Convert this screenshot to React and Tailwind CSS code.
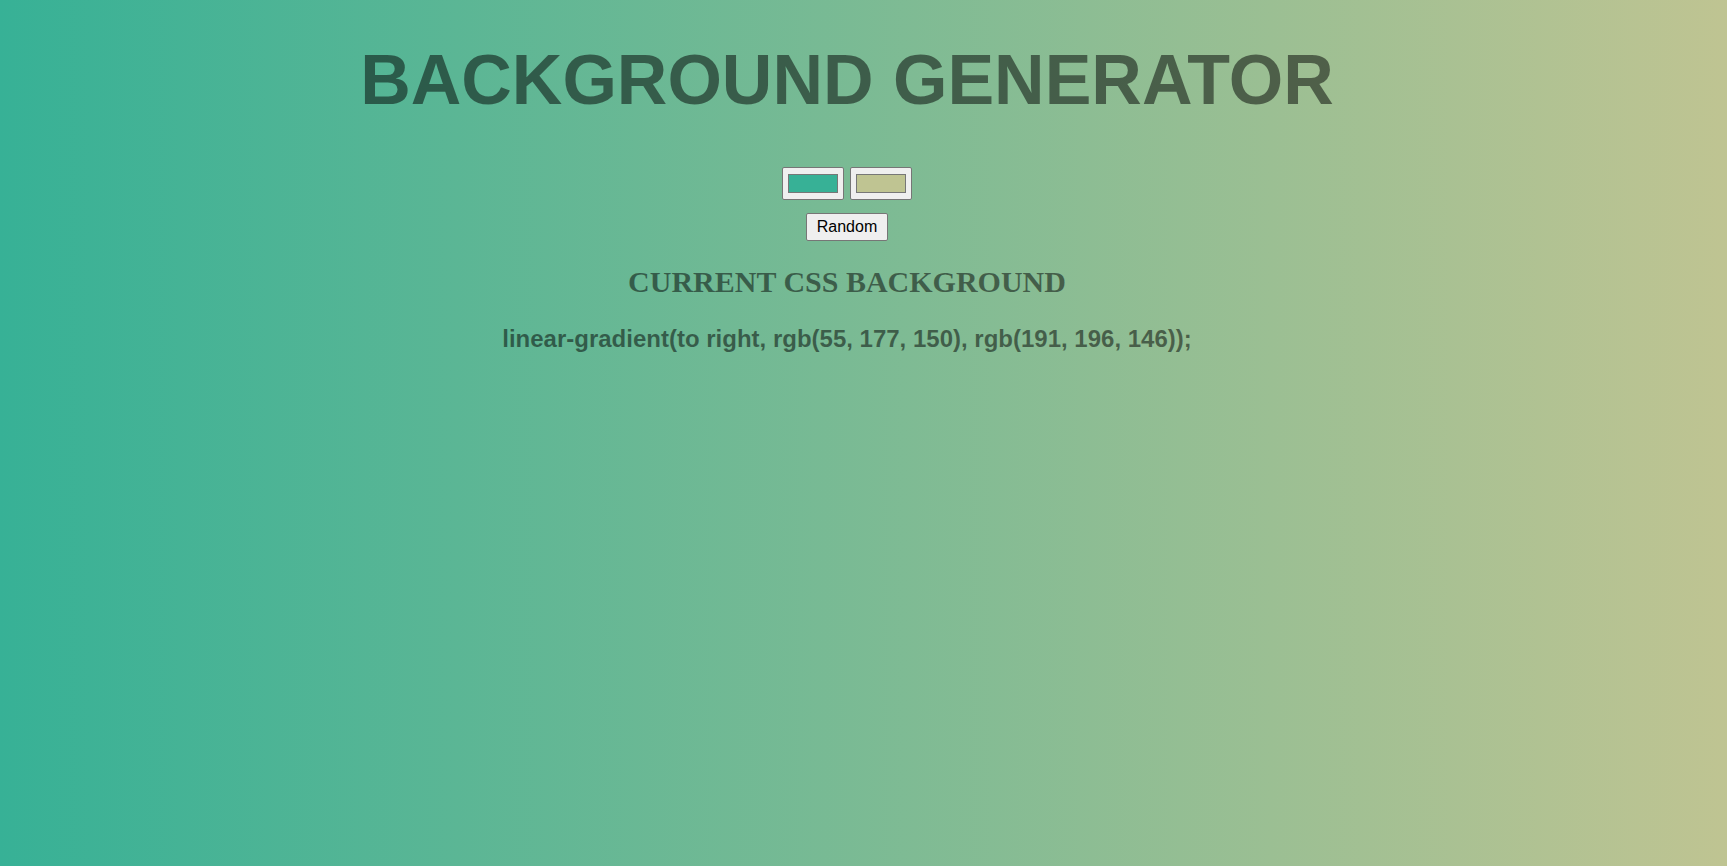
import React, { useState } from "react";

const toHex = (rgb) => "#" + rgb.map((n) => n.toString(16).padStart(2, "0")).join("");
const fromHex = (hex) => [1, 3, 5].map((i) => parseInt(hex.slice(i, i + 2), 16));
const randomRgb = () => [0, 0, 0].map(() => Math.floor(Math.random() * 256));

function ColorPicker({ value, onChange }) {
  return (
    <label className="relative block w-[62px] h-[33px] border border-[#767676] rounded-[2px] bg-[#efefef] pt-[6px] pl-[5px] cursor-pointer">
      <input
        type="color"
        value={toHex(value)}
        onChange={(e) => onChange(fromHex(e.target.value))}
        className="absolute inset-0 opacity-0 w-full h-full cursor-pointer"
      />
      <div
        className="w-[50px] h-[19px] border border-[#777777]"
        style={{ backgroundColor: `rgb(${value.join(", ")})` }}
      />
    </label>
  );
}

export default function App() {
  const [left, setLeft] = useState([55, 177, 150]);
  const [right, setRight] = useState([191, 196, 146]);

  const gradient = `linear-gradient(to right, rgb(${left.join(", ")}), rgb(${right.join(", ")}))`;

  return (
    <div
      className="min-h-screen w-full flex flex-col items-center pr-[33px] text-black/50"
      style={{ background: gradient }}
    >
      <h1 className="mt-[45px] text-[70px] leading-none font-bold font-['Liberation_Sans',Arial,sans-serif] uppercase">
        Background Generator
      </h1>

      <div className="mt-[52px] flex gap-[6px]">
        <ColorPicker value={left} onChange={setLeft} />
        <ColorPicker value={right} onChange={setRight} />
      </div>

      <button
        onClick={() => {
          setLeft(randomRgb());
          setRight(randomRgb());
        }}
        className="mt-[13px] w-[82px] h-[28px] border border-[#767676] rounded-[2px] bg-[#efefef] text-black text-[16px] font-['Liberation_Sans',Arial,sans-serif] leading-none cursor-pointer"
      >
        Random
      </button>

      <h2 className="mt-[26px] text-[30px] leading-none font-bold font-['Liberation_Serif','Times_New_Roman',serif]">
        CURRENT CSS BACKGROUND
      </h2>

      <h3 className="mt-[30px] text-[24px] leading-none font-bold font-['Liberation_Sans',Arial,sans-serif]">
        {gradient};
      </h3>
    </div>
  );
}
